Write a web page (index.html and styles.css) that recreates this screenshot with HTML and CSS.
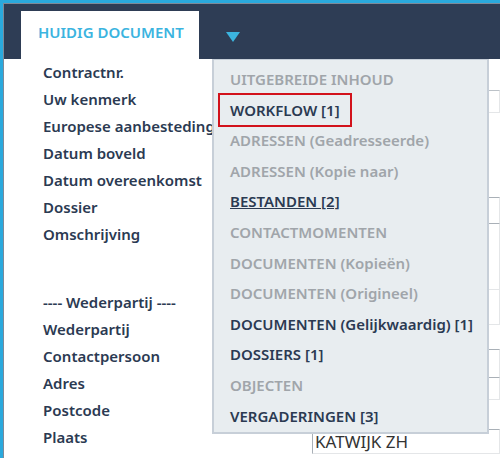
FILE: index.html
```html
<!DOCTYPE html>
<html lang="nl">
<head>
  <meta charset="UTF-8" />
  <title>Huidig document</title>
  <link rel="stylesheet" href="styles.css">
</head>
<body>

  <div class="frame">
    <div class="topbar">
      <div class="tab">HUIDIG DOCUMENT</div>
      <div class="toggle"><span class="caret"></span></div>

      <div class="menu">
        <span class="item off">UITGEBREIDE INHOUD</span>
        <span class="item selected">WORKFLOW [1]</span>
        <span class="item off">ADRESSEN (Geadresseerde)</span>
        <span class="item off">ADRESSEN (Kopie naar)</span>
        <span class="item link">BESTANDEN [2]</span>
        <span class="item off">CONTACTMOMENTEN</span>
        <span class="item off">DOCUMENTEN (Kopieën)</span>
        <span class="item off">DOCUMENTEN (Origineel)</span>
        <span class="item">DOCUMENTEN (Gelijkwaardig) [1]</span>
        <span class="item">DOSSIERS [1]</span>
        <span class="item off">OBJECTEN</span>
        <span class="item">VERGADERINGEN [3]</span>
      </div>
    </div>

    <div class="form">
      <div class="row"><label>Contractnr.</label></div>
      <div class="row"><label>Uw kenmerk</label><div class="field f-kenmerk"></div></div>
      <div class="row"><label>Europese aanbesteding</label></div>
      <div class="row"><label>Datum boveld</label></div>
      <div class="row"><label>Datum overeenkomst</label></div>
      <div class="row"><label>Dossier</label><div class="field f-dossier"></div></div>
      <div class="row tall"><label>Omschrijving</label><div class="field f-area"></div></div>
      <div class="row"><label>---- Wederpartij ----</label><div class="field f-partij"></div></div>
      <div class="row"><label>Wederpartij</label></div>
      <div class="row"><label>Contactpersoon</label><div class="field f-contact"></div></div>
      <div class="row"><label>Adres</label><div class="field f-adres"></div></div>
      <div class="row"><label>Postcode</label></div>
      <div class="row"><label>Plaats</label><div class="field f-plaats">KATWIJK ZH</div></div>
    </div>
  </div>

</body>
</html>
```

FILE: styles.css
```css
* { box-sizing: border-box; }

html, body {
  margin: 0;
  height: 100%;
  overflow: hidden;
}

body {
  font-family: 'Noto Sans', 'Open Sans', sans-serif;
  background: #fff;
  border-top: 3px solid #2aa9dd;
  border-left: 3px solid #2aa9dd;
}

.frame {
  height: 100%;
  border-top: 1px solid #7e8a98;
  border-left: 1px solid #7e8a98;
}

.topbar {
  position: relative;
  height: 55px;
  background: #2e3d55;
  display: flex;
  align-items: flex-end;
  padding-left: 17px;
}

.tab {
  height: 48px;
  width: 178px;
  background: #fff;
  color: #3bb4df;
  font-weight: 600;
  font-size: 15px;
  padding-left: 17px;
  line-height: 43px;
}

.toggle {
  height: 48px;
  padding-left: 27px;
  padding-top: 21px;
}

.caret {
  display: block;
  width: 0;
  height: 0;
  border-left: 7px solid transparent;
  border-right: 7px solid transparent;
  border-top: 10px solid #3bb4df;
}

.menu {
  position: absolute;
  top: 100%;
  left: 208px;
  width: 277px;
  z-index: 10;
  background: #e8edf0;
  border: 2px solid #c7cfd8;
  border-top-width: 1px;
  padding: 4px 6px 1px;
  display: flex;
  flex-direction: column;
  align-items: flex-start;
}

.item {
  display: block;
  line-height: 30.6px;
  padding: 0 10px;
  font-size: 15px;
  font-weight: 600;
  color: #2b3a52;
  white-space: nowrap;
}

.item.off { color: #a0a5aa; }
.item.link { text-decoration: underline; }
.item.selected { outline: 2px solid #d2121b; }

.form { padding-left: 39px; }

.row {
  display: flex;
  height: 27px;
}

.row.tall { height: 68px; }

.row label {
  flex: none;
  width: 269px;
  line-height: 27px;
  font-size: 15px;
  font-weight: 600;
  color: #2b3a52;
}

.field {
  flex: 1;
  border: 1px solid #e4e6e8;
  border-top-color: #a9b0b7;
  font-size: 17px;
  color: #333;
  padding-left: 2px;
  line-height: 24px;
}

.f-kenmerk { margin-top: 4px; height: 23px; border-top-color: #bcc2c8; }
.f-dossier { margin-top: 3px; height: 27px; border-bottom: none; }
.f-area { margin-top: 2px; height: 67px; }
.f-partij { height: 36px; border-top: none; }
.f-contact { margin-top: 6px; height: 28px; border-bottom: none; }
.f-adres { margin-top: 7px; height: 23px; }
.f-plaats { margin-top: 5px; height: 25px; border-left-color: #a9b0b7; }
```
